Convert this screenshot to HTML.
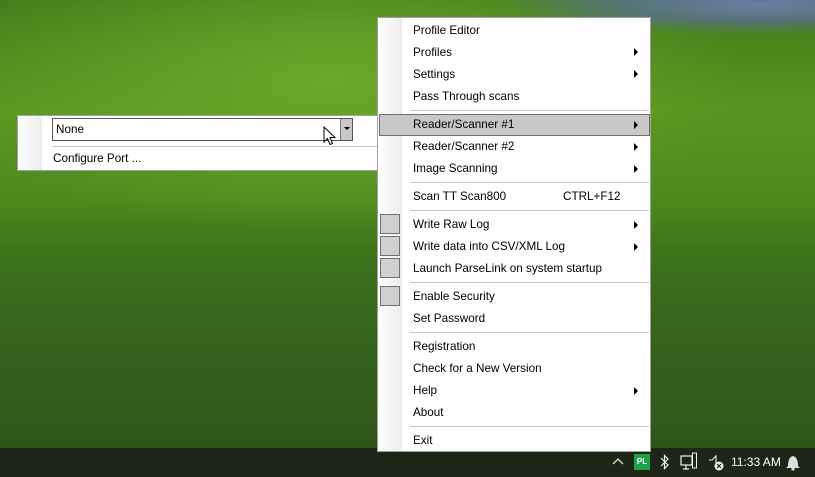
<!DOCTYPE html>
<html><head><meta charset="utf-8"><style>
*{margin:0;padding:0;box-sizing:border-box}
body{width:815px;height:477px;overflow:hidden;position:relative;font-family:"Liberation Sans",sans-serif;font-size:11.7px;color:#000;
background:
radial-gradient(ellipse 260px 30px at 760px 5px,rgba(110,125,175,0.95),rgba(90,110,150,0.7) 55%,rgba(0,0,0,0) 100%),
radial-gradient(ellipse 420px 150px at 330px 80px,#6aa82a,rgba(80,140,30,0) 100%),
linear-gradient(180deg,#427a1a 0px,#58951f 110px,#4d8a1e 200px,#3d741b 250px,#37661c 320px,#2f5619 448px);}
.tb{position:absolute;left:0;top:448px;width:815px;height:29px;background:#1d2517}
.menu{position:absolute;z-index:5;left:377px;top:17px;width:274px;height:435px;background:#fff;border:1px solid #a0a0a0}
.gut{position:absolute;left:0;top:0;width:24px;height:100%;background:linear-gradient(90deg,#fff,#ececec)}
.it{position:absolute;left:35px;height:22px;line-height:22px;white-space:nowrap;margin-top:1px}
.ar{position:absolute;left:256px;width:0;height:0;border-top:4px solid transparent;border-bottom:4px solid transparent;border-left:4px solid #000}
.sep{position:absolute;left:32px;right:1px;height:1px;background:#c8c8c8}
.chk{position:absolute;left:2px;width:20px;height:20px;background:#d0d0d0;border:1px solid #707070}
.hl{position:absolute;left:1px;top:96px;width:271px;height:22px;background:#c8c8c8;border:1px solid #707070}
.pop{position:absolute;left:17px;top:115px;width:360px;height:56px;background:#fff;border:1px solid #a0a0a0;border-right:none}
</style></head><body>
<div class="pop">
 <div class="gut" style="width:24px"></div>
 <div style="position:absolute;left:34px;top:2px;width:301px;height:23px;border:1px solid #555;background:#fff">
  <span style="position:absolute;left:3px;top:4px">None</span>
  <div style="position:absolute;right:0;top:0;width:12px;height:21px;background:#c8c8c8;border-left:1px solid #777"><div style="position:absolute;left:3px;top:8px;border-left:3px solid transparent;border-right:3px solid transparent;border-top:3px solid #000"></div></div>
 </div>
 <div style="position:absolute;left:34px;top:30px;width:326px;height:1px;background:#c8c8c8"></div>
 <span style="position:absolute;left:35px;top:36px">Configure Port ...</span>
 <svg style="position:absolute;left:305px;top:10px" width="14" height="22" viewBox="0 0 14 22"><path d="M1 1 L1 16 L4.5 12.5 L7 18.5 L9.5 17.5 L7 11.5 L12 11.5 Z" fill="#fff" stroke="#000" stroke-width="1"/></svg>
</div>
<div class="tb">
 <svg style="position:absolute;left:612px;top:10px" width="12" height="8"><path d="M1 6 L6 1 L11 6" fill="none" stroke="#ddd" stroke-width="1.3"/></svg>
 <div style="position:absolute;left:634px;top:6px;width:16px;height:16px;background:#1aa34a;color:#fff;font-size:8px;font-weight:bold;line-height:16px;text-align:center">PL</div>
 <svg style="position:absolute;left:660px;top:5px" width="10" height="18"><path d="M1 5 L8 12 L4.5 15.5 L4.5 2.5 L8 6 L1 13" fill="none" stroke="#eee" stroke-width="1.2"/></svg>
 <svg style="position:absolute;left:680px;top:4px" width="18" height="20"><rect x="1" y="4" width="11" height="9" fill="none" stroke="#eee" stroke-width="1.2"/><path d="M6 13 V17 M3 17 H9" stroke="#eee" stroke-width="1.2"/><rect x="12.5" y="1" width="4" height="15" fill="none" stroke="#eee" stroke-width="1"/></svg>
 <svg style="position:absolute;left:707px;top:6px" width="18" height="18"><path d="M2 6 H5 L9 2 V14" fill="none" stroke="#eee" stroke-width="1.1"/><circle cx="12" cy="12" r="4.5" fill="#eee"/><path d="M10 10 L14 14 M14 10 L10 14" stroke="#1d2517" stroke-width="1.2"/></svg>
 <span style="position:absolute;left:731px;top:7px;color:#fff;font-size:12px">11:33 AM</span>
 <svg style="position:absolute;left:785px;top:5px" width="16" height="18"><path d="M3 13 Q3 4 8 3 Q13 4 13 13 L15 15 H1 Z" fill="#ddd"/><circle cx="8" cy="16" r="1.6" fill="#ddd"/></svg>
</div>
<div class="menu">
 <div class="gut"></div>
 <div class="hl"></div>
 <div class="it" style="top:1px">Profile Editor</div>
 <div class="it" style="top:23px">Profiles</div><div class="ar" style="top:30px"></div>
 <div class="it" style="top:45px">Settings</div><div class="ar" style="top:52px"></div>
 <div class="it" style="top:67px">Pass Through scans</div>
 <div class="sep" style="top:92px"></div>
 <div class="it" style="top:95px">Reader/Scanner #1</div><div class="ar" style="top:103px"></div>
 <div class="it" style="top:117px">Reader/Scanner #2</div><div class="ar" style="top:125px"></div>
 <div class="it" style="top:139px">Image Scanning</div><div class="ar" style="top:147px"></div>
 <div class="sep" style="top:164px"></div>
 <div class="it" style="top:167px">Scan TT Scan800</div><div class="it" style="top:167px;left:185px">CTRL+F12</div>
 <div class="sep" style="top:192px"></div>
 <div class="chk" style="top:196px"></div><div class="it" style="top:195px">Write Raw Log</div><div class="ar" style="top:203px"></div>
 <div class="chk" style="top:218px"></div><div class="it" style="top:217px">Write data into CSV/XML Log</div><div class="ar" style="top:225px"></div>
 <div class="chk" style="top:240px"></div><div class="it" style="top:239px">Launch ParseLink on system startup</div>
 <div class="sep" style="top:264px"></div>
 <div class="chk" style="top:268px"></div><div class="it" style="top:267px">Enable Security</div>
 <div class="it" style="top:289px">Set Password</div>
 <div class="sep" style="top:314px"></div>
 <div class="it" style="top:317px">Registration</div>
 <div class="it" style="top:339px">Check for a New Version</div>
 <div class="it" style="top:361px">Help</div><div class="ar" style="top:369px"></div>
 <div class="it" style="top:383px">About</div>
 <div class="sep" style="top:408px"></div>
 <div class="it" style="top:411px">Exit</div>
</div>
</body></html>
